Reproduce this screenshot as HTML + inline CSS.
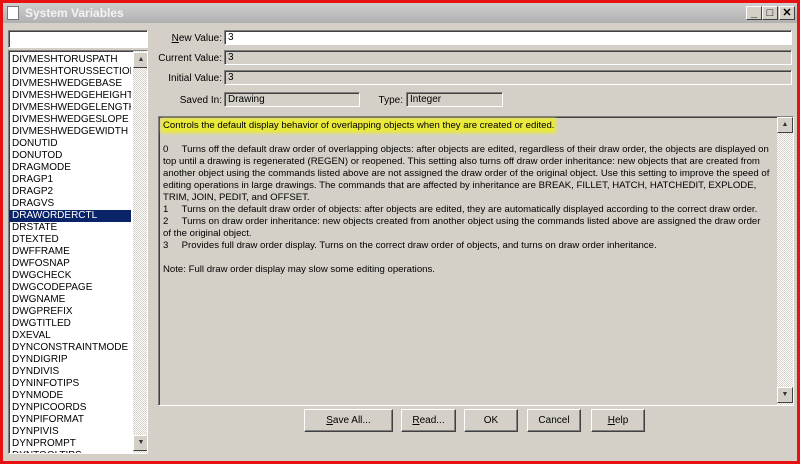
<!DOCTYPE html>
<html><head><style>
*{margin:0;padding:0;box-sizing:border-box}
body{width:800px;height:464px;background:#e81010;position:relative;overflow:hidden;font-family:"Liberation Sans",sans-serif;font-size:10px;color:#000}
#win{position:absolute;left:3px;top:3px;width:794px;height:458px;background:#d4d0c8}
#title{position:absolute;left:0;top:0;width:794px;height:20px;background:linear-gradient(#cfcfcf,#b0b0b0);color:#f4f4f4;font-weight:bold;font-size:12px;padding:3px 0 0 22px}
#ico{position:absolute;left:4px;top:3px;width:12px;height:14px;background:#fff;border:1px solid #777}
.tb{position:absolute;top:3px;width:16px;height:14px;background:#d4d0c8;border:1px solid;border-color:#fff #404040 #404040 #fff;font-size:11px;text-align:center;line-height:12px;font-weight:bold}
.a{position:absolute}
.sunk{border:1px solid;border-color:#808080 #fff #fff #808080;box-shadow:inset 1px 1px 0 #404040}
.lbl{position:absolute;text-align:right;width:100px;font-size:10px}
.fld{position:absolute;height:15px;padding:1px 0 0 3px;font-size:10px}
#list{position:absolute;left:5px;top:47px;width:140px;height:404px;background:#fff;overflow:hidden;padding-top:3px}
#list div.i{height:12px;line-height:12px;padding-left:3px;font-size:10px;white-space:nowrap;width:122px;overflow:hidden}
#list .sel{background:#0a246a;color:#fff}
.sb{position:absolute;background:repeating-conic-gradient(#fff 0 25%,#d4d0c8 0 50%) 0 0/2px 2px}
.arr{position:absolute;width:16px;height:16px;background:#d4d0c8;border:1px solid;border-color:#fff #404040 #404040 #fff;font-size:7px;text-align:center;line-height:14px;color:#333}
#txt{position:absolute;left:155px;top:113px;width:636px;height:290px;overflow:hidden}
#txt p{white-space:nowrap;font-size:9.6px;line-height:12px;padding-left:4px}
.btn{position:absolute;top:406px;height:23px;background:#d4d0c8;border:1px solid;border-color:#fff #404040 #404040 #fff;box-shadow:inset -1px -1px 0 #808080;text-align:center;line-height:21px;font-size:10px}
</style></head><body>
<div id="win">
<div id="title"><div id="ico"></div>System Variables</div>
<div class="tb" style="left:743px">_</div><div class="tb" style="left:759px">□</div><div class="tb" style="left:776px">✕</div>

<div class="a sunk" style="left:5px;top:27px;width:140px;height:18px;background:#fff"></div>
<div id="list" class="sunk">
<div class="i">DIVMESHTORUSPATH</div><div class="i">DIVMESHTORUSSECTION</div><div class="i">DIVMESHWEDGEBASE</div><div class="i">DIVMESHWEDGEHEIGHT</div><div class="i">DIVMESHWEDGELENGTH</div><div class="i">DIVMESHWEDGESLOPE</div><div class="i">DIVMESHWEDGEWIDTH</div><div class="i">DONUTID</div><div class="i">DONUTOD</div><div class="i">DRAGMODE</div><div class="i">DRAGP1</div><div class="i">DRAGP2</div><div class="i">DRAGVS</div><div class="i sel">DRAWORDERCTL</div><div class="i">DRSTATE</div><div class="i">DTEXTED</div><div class="i">DWFFRAME</div><div class="i">DWFOSNAP</div><div class="i">DWGCHECK</div><div class="i">DWGCODEPAGE</div><div class="i">DWGNAME</div><div class="i">DWGPREFIX</div><div class="i">DWGTITLED</div><div class="i">DXEVAL</div><div class="i">DYNCONSTRAINTMODE</div><div class="i">DYNDIGRIP</div><div class="i">DYNDIVIS</div><div class="i">DYNINFOTIPS</div><div class="i">DYNMODE</div><div class="i">DYNPICOORDS</div><div class="i">DYNPIFORMAT</div><div class="i">DYNPIVIS</div><div class="i">DYNPROMPT</div><div class="i">DYNTOOLTIPS</div>
<div class="sb" style="left:124px;top:0;width:16px;height:402px"></div>
<div class="arr" style="left:124px;top:1px">▲</div>
<div class="arr" style="left:124px;top:384px">▼</div>
</div>

<div class="lbl" style="left:119px;top:30px"><u>N</u>ew Value:</div>
<div class="fld sunk" style="left:221px;top:27px;width:568px;background:#fff">3</div>
<div class="lbl" style="left:119px;top:50px">Current Value:</div>
<div class="fld sunk" style="left:221px;top:47px;width:568px">3</div>
<div class="lbl" style="left:119px;top:70px">Initial Value:</div>
<div class="fld sunk" style="left:221px;top:67px;width:568px">3</div>
<div class="lbl" style="left:119px;top:92px">Saved In:</div>
<div class="fld sunk" style="left:221px;top:89px;width:136px">Drawing</div>
<div class="lbl" style="left:300px;top:92px">Type:</div>
<div class="fld sunk" style="left:403px;top:89px;width:97px">Integer</div>

<div id="txt" class="sunk">
<p style="margin-top:3px"><span style="background:#eaea3a;box-shadow:0 0 3px 2px #eaea3a">Controls the default display behavior of overlapping objects when they are created or edited.</span></p>
<p>&nbsp;</p>
<p>0&nbsp;&nbsp;&nbsp;&nbsp;&nbsp;Turns off the default draw order of overlapping objects: after objects are edited, regardless of their draw order, the objects are displayed on</p>
<p>top until a drawing is regenerated (REGEN) or reopened. This setting also turns off draw order inheritance: new objects that are created from</p>
<p>another object using the commands listed above are not assigned the draw order of the original object. Use this setting to improve the speed of</p>
<p>editing operations in large drawings. The commands that are affected by inheritance are BREAK, FILLET, HATCH, HATCHEDIT, EXPLODE,</p>
<p>TRIM, JOIN, PEDIT, and OFFSET.</p>
<p>1&nbsp;&nbsp;&nbsp;&nbsp;&nbsp;Turns on the default draw order of objects: after objects are edited, they are automatically displayed according to the correct draw order.</p>
<p>2&nbsp;&nbsp;&nbsp;&nbsp;&nbsp;Turns on draw order inheritance: new objects created from another object using the commands listed above are assigned the draw order</p>
<p>of the original object.</p>
<p>3&nbsp;&nbsp;&nbsp;&nbsp;&nbsp;Provides full draw order display. Turns on the correct draw order of objects, and turns on draw order inheritance.</p>
<p>&nbsp;</p>
<p>Note: Full draw order display may slow some editing operations.</p>
<div class="sb" style="left:618px;top:0;width:16px;height:288px"></div>
<div class="arr" style="left:618px;top:0">▲</div>
<div class="arr" style="left:618px;top:270px">▼</div>
</div>

<div class="btn" style="left:301px;width:89px"><u>S</u>ave All...</div>
<div class="btn" style="left:398px;width:55px"><u>R</u>ead...</div>
<div class="btn" style="left:461px;width:54px">OK</div>
<div class="btn" style="left:524px;width:54px">Cancel</div>
<div class="btn" style="left:588px;width:54px"><u>H</u>elp</div>
</div>
</body></html>
